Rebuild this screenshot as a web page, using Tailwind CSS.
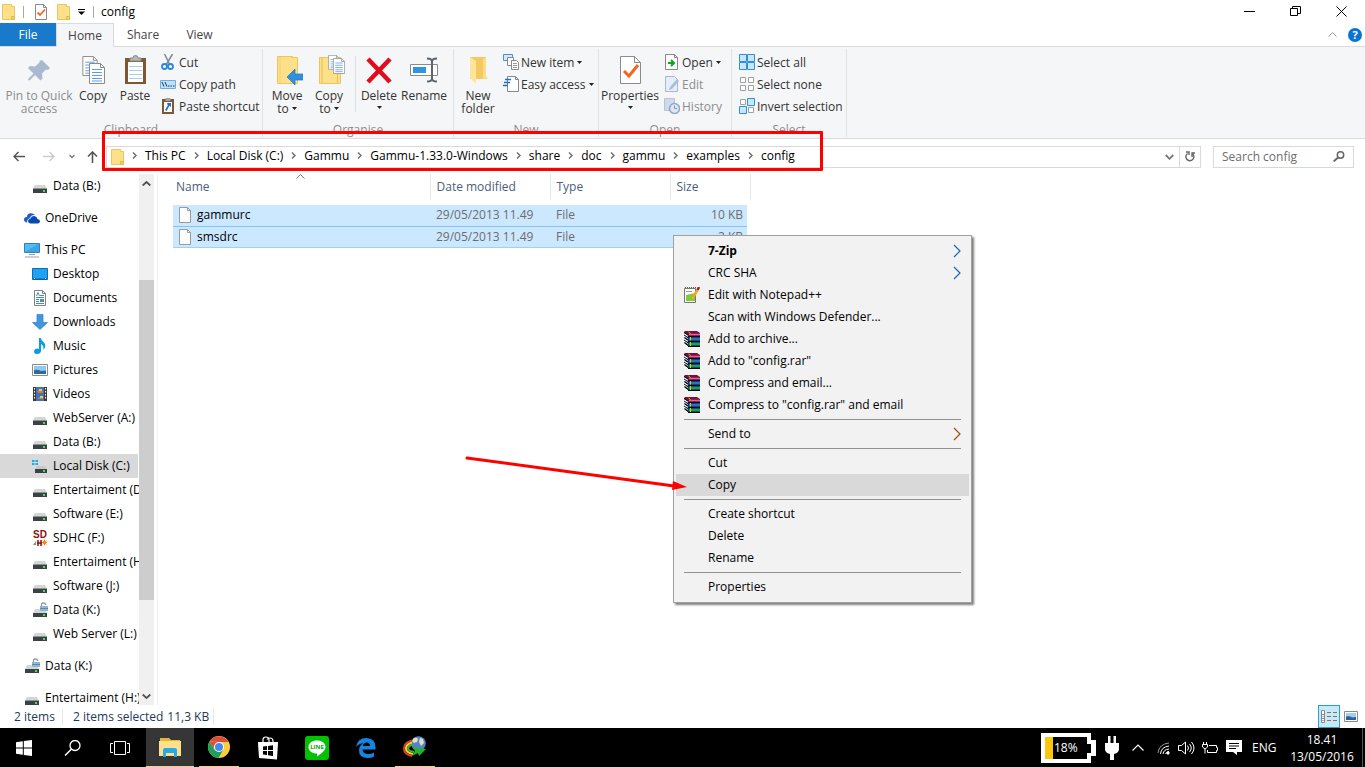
<!DOCTYPE html>
<html lang="en">
<head>
  <meta charset="UTF-8">
  <title>config</title>
  <meta name="viewport" content="width=device-width, initial-scale=1.0">
  <script src="https://cdn.jsdelivr.net/npm/@tailwindcss/browser@4"></script>
</head>
<body class="relative flex h-screen flex-col overflow-hidden bg-white font-['Open_Sans',sans-serif] text-[12px] leading-4 text-black">

  <!-- Shared icons -->
  <svg class="hidden" xmlns="http://www.w3.org/2000/svg">
    <symbol id="folder" viewBox="0 0 14 16">
      <path d="M.5.5h9v2h3v13H.5z" fill="#ffe08a" stroke="#eac65c"/>
      <path d="M9.500 12.500h3v3h-3z" fill="#f2cf6b" stroke="#e3bb4a"/>
    </symbol>
    <symbol id="checkdoc" viewBox="0 0 12 16">
      <path d="M.5.5h8l3 3v12H.5z" fill="#fff" stroke="#8a8a8a"/>
      <path d="M8.500.5v3h3" fill="none" stroke="#8a8a8a"/>
      <path d="M2.500 8.500l2.500 2.500 5-5.500" fill="none" stroke="#f4651d" stroke-width="1.800"/>
    </symbol>
    <symbol id="down" viewBox="0 0 5 3"><path d="M0 0h5L2.500 3z" fill="#222"/></symbol>
    <symbol id="crumb" viewBox="0 0 5 7"><path d="M1 .5l3 3-3 3" fill="none" stroke="#6b6b6b" stroke-width="1.400"/></symbol>
    <symbol id="drive" viewBox="0 0 16 16">
      <path d="M3 7h10l2 4H1z" fill="#d3d6d8"/>
      <path d="M1 11h14v4H1z" fill="#3c4144"/>
      <path d="M1 10.500h14" stroke="#8d9294"/>
      <path d="M11 12h2v2h-2z" fill="#3ee055"/>
    </symbol>
    <symbol id="lockdrive" viewBox="0 0 16 16">
      <path d="M3 7h10l2 4H1z" fill="#d3d6d8"/>
      <path d="M1 11h14v4H1z" fill="#3c4144"/>
      <path d="M11 12h2v2h-2z" fill="#3ee055"/>
      <path d="M9.500 5V2.500Q9.500 1 11.500 1T13.500 2.500V3" fill="none" stroke="#8c9aa3" stroke-width="1.300"/>
      <path d="M8 4h8v5H8z" fill="#8fb6cf"/>
      <path d="M8 6.500h8" stroke="#5d89a8"/>
    </symbol>
    <symbol id="file" viewBox="0 0 12 16">
      <path d="M.5.5h8l3 3v12H.5z" fill="#fdfdfd" stroke="#9a9a9a"/>
      <path d="M8.500.5v3h3" fill="none" stroke="#9a9a9a"/>
    </symbol>
    <symbol id="rar" viewBox="0 0 16 16">
      <path d="M0 1l1-1h12l3 2v3H5L0 2z" fill="#7a1038"/>
      <path d="M5 3.500h11" stroke="#e05fae" stroke-width="1.500"/>
      <path d="M1 6l3-1h12v5H5L1 8z" fill="#123f86"/>
      <path d="M5 8h11" stroke="#3f8fdc" stroke-width="1.300"/>
      <path d="M1 11l3-1h12v5.500H5L1 13z" fill="#0b5a45"/>
      <path d="M5 13h11" stroke="#35b98a" stroke-width="1.300"/>
      <path d="M0 3l4 2.500M0 5l4 2.500M0 8l4 2.500M0 10l4 2.500M0 13l4 2.500" stroke="#fff" stroke-width=".9"/>
      <path d="M0 1.500l4.500 3M0 4l4.500 3M0 6.500l4.500 3M0 9l4.500 3M0 11.500l4.500 3.500M4 5.500h12M4 10.500h12M4 15.500h12" stroke="#0a0a0a"/>
      <path d="M4.500 1l2 1.500M6.500 6v3.500M6.500 11v4" stroke="#f1c40f"/>
    </symbol>
    <symbol id="submenu" viewBox="0 0 8 14"><path d="M1 1l6 6-6 6" fill="none" stroke="currentColor" stroke-width="1.200"/></symbol>
    <symbol id="page" viewBox="0 0 16 21">
      <path d="M.5.5h11l4 4v16H.5z" fill="#fff" stroke="#8a8a8a"/>
      <path d="M11.500.5v4h4" fill="none" stroke="#8a8a8a"/>
      <path d="M3 6.500h10M3 9.500h10M3 12.500h10M3 15.500h10M3 18h10" stroke="#5b9be8"/>
    </symbol>
  </svg>

  <!-- Title bar -->
  <header class="flex h-[23px] shrink-0 items-center">
    <svg class="ml-[2px] h-4 w-[14px]"><use href="#folder"/></svg>
    <span class="ml-[7px] h-3 w-px bg-[#a8a8a8]"></span>
    <button class="ml-[11px]" aria-label="Properties"><svg class="h-4 w-3"><use href="#checkdoc"/></svg></button>
    <button class="ml-[10px]" aria-label="New folder"><svg class="h-4 w-[14px]"><use href="#folder"/></svg></button>
    <button class="ml-[7px]" aria-label="Customise toolbar">
      <svg class="h-[6px] w-[7px]" viewBox="0 0 7 6"><path d="M0 .5h7" stroke="#000"/><path d="M0 2.500h7L3.500 6z"/></svg>
    </button>
    <span class="ml-2 h-3 w-px bg-[#a8a8a8]"></span>
    <h1 class="ml-[7px] grow">config</h1>
    <button class="flex h-[22px] w-[46px] items-center justify-center" aria-label="Minimise">
      <svg class="size-[11px]" viewBox="0 0 11 11"><path d="M0 5.500h11" stroke="#000"/></svg>
    </button>
    <button class="flex h-[22px] w-[46px] items-center justify-center" aria-label="Restore">
      <svg class="size-[11px]" viewBox="0 0 11 11" fill="none" stroke="#000"><path d="M.5 2.500h7v7h-7zM2.500 2.500v-2h8v7h-3"/></svg>
    </button>
    <button class="mr-px flex h-[22px] w-[46px] items-center justify-center" aria-label="Close">
      <svg class="size-[11px]" viewBox="0 0 11 11" stroke="#000"><path d="M.5.5l10 10M10.500.5l-10 10"/></svg>
    </button>
  </header>

  <!-- Ribbon tabs -->
  <nav class="flex h-6 shrink-0 border-b border-[#dadbdc] text-[#444]">
    <button class="h-[23px] w-14 bg-[#1979ca] text-white">File</button>
    <button class="h-6 w-[58px] border border-b-0 border-[#dadbdc] bg-[#f5f6f7]">Home</button>
    <button class="h-[23px] w-[58px]">Share</button>
    <button class="h-[23px] w-[55px]">View</button>
    <span class="grow"></span>
    <button class="mr-[11px]" aria-label="Collapse ribbon">
      <svg class="h-[5px] w-[9px]" viewBox="0 0 9 5"><path d="M.5 4.500l4-4 4 4" fill="none" stroke="#999"/></svg>
    </button>
    <button class="my-auto mr-[3px] size-[14px] rounded-full bg-[#0a74d4] text-[11px] leading-[14px] font-bold text-white" aria-label="Help">?</button>
  </nav>

  <!-- Ribbon -->
  <section class="flex h-[92px] shrink-0 overflow-hidden border-b border-[#dadbdc] bg-[#f5f6f7] pt-[2px] leading-[13px] whitespace-nowrap text-[#333]">
    <div class="flex h-[88px] w-[263px] flex-col items-center border-r border-[#e0e1e2]">
      <div class="flex h-[74px] w-full pt-[5px] pl-[5px]">
        <button class="flex w-[68px] flex-col items-center text-[#8d8d8d]" disabled>
          <svg class="size-8" viewBox="0 0 32 32"><path d="M19 6l8 8-2 2-2-.5-4 4 .5 5-2 2-5.500-5.500L7 26l-2 .5.500-2 5-5L5 14l2-2 5 .5 4.500-4L16.500 7z" fill="#a9bad0"/></svg>
          <span class="mt-[3px]">Pin to Quick<br>access</span>
        </button>
        <button class="flex w-10 flex-col items-center">
          <svg class="size-8" viewBox="0 0 32 32"><use href="#page" x="5" y="2" width="16" height="20"/><use href="#page" x="12" y="9" width="16" height="21"/></svg>
          <span class="mt-[3px]">Copy</span>
        </button>
        <button class="flex w-11 flex-col items-center">
          <svg class="size-8" viewBox="0 0 32 32">
            <path d="M6 4h21v26H6z" fill="#7d5836"/><path d="M9 8h15v20H9z" fill="#fff"/>
            <path d="M10 12.500h13M10 16.500h13M10 20.500h13M10 24.500h13" stroke="#aacdf0"/>
            <path d="M11 7V4h3q0-2.500 2.500-2.500T19 4h3v3z" fill="#b7b7b7" stroke="#888"/>
          </svg>
          <span class="mt-[3px]">Paste</span>
        </button>
        <div class="-mt-[3px] flex flex-col pl-[3px]">
          <button class="flex h-[22px] items-center gap-[3px]">
            <svg class="size-4" viewBox="0 0 16 16" fill="none"><path d="M4.500 0L10 11M12.500 0L6 11" stroke="#7c8a96" stroke-width="1.500"/><circle cx="4.500" cy="12.500" r="2.500" stroke="#2b8ad6" stroke-width="1.800"/><circle cx="10.500" cy="12.500" r="2.500" stroke="#2b8ad6" stroke-width="1.800"/></svg>Cut
          </button>
          <button class="flex h-[22px] items-center gap-[3px]">
            <svg class="size-4" viewBox="0 0 16 16"><path d="M.5 4.500h15v8H.5z" fill="#bfe0f8" stroke="#6faedd"/><path d="M2 6l2 4.500M5 6l2 4.500M8 10h1.500M10.500 10H12M13 10h1.500" stroke="#1c3c5c"/></svg>Copy path
          </button>
          <button class="flex h-[22px] items-center gap-[3px]">
            <svg class="size-4" viewBox="0 0 16 16"><path d="M2 1h12v15H2z" fill="#7d5836"/><path d="M4 4h8v10H4z" fill="#fff"/><path d="M5.500 0h5v3h-5z" fill="#a5a5a5"/><path d="M7 5h4v4L9.500 7.800 6.500 13 5 12l2.800-4.500z" fill="#1f6fc2"/></svg>Paste shortcut
          </button>
        </div>
      </div>
      <span class="text-[#8d8d8d]">Clipboard</span>
    </div>

    <div class="flex h-[88px] w-[191px] flex-col items-center border-r border-[#e0e1e2]">
      <div class="flex h-[74px] w-full pt-[5px] pl-[3px]">
        <button class="flex w-[42px] flex-col items-center">
          <svg class="size-8" viewBox="0 0 32 32"><path d="M6.500 2.500h15v27h-15z" fill="#ffe08a" stroke="#eac65c"/><path d="M20.500 3.500h6v26h-20" fill="#ffe08a" stroke="#eac65c"/><path d="M9 3v26" stroke="#f2cf6b"/><path d="M16 23l8-8v5h8v6h-8v5z" fill="#3090dd" stroke="#2479bd" stroke-width=".7"/></svg>
          <span class="mt-[3px]">Move</span>
          <span class="flex items-center gap-[3px]">to<svg class="h-[3px] w-[5px]"><use href="#down"/></svg></span>
        </button>
        <button class="flex w-[42px] flex-col items-center">
          <svg class="size-8" viewBox="0 0 32 32"><path d="M6.500 3.500h21v26h-21z" fill="#ffe08a" stroke="#eac65c"/><path d="M9 4v25M24.500 18v11" stroke="#e5be52"/><use href="#page" x="15" y="1" width="12" height="15"/><use href="#page" x="20" y="4" width="12" height="16"/></svg>
          <span class="mt-[3px]">Copy</span>
          <span class="flex items-center gap-[3px]">to<svg class="h-[3px] w-[5px]"><use href="#down"/></svg></span>
        </button>
        <span class="mt-[2px] ml-[5px] h-14 w-px bg-[#dcdde0]"></span>
        <button class="ml-[3px] flex w-10 flex-col items-center">
          <svg class="size-8" viewBox="0 0 32 32"><path d="M5 5l22 23M27 5L5 28" stroke="#e00b1c" stroke-width="4.500"/></svg>
          <span class="mt-[3px]">Delete</span>
          <svg class="mt-1 h-[3px] w-[5px]"><use href="#down"/></svg>
        </button>
        <button class="ml-px flex w-12 flex-col items-center">
          <svg class="size-8" viewBox="0 0 32 32"><path d="M2.500 10.500h27v11h-27z" fill="#fff" stroke="#8a8a8a"/><path d="M5 13h13v6H5z" fill="#2e94e8"/><path d="M19 4.500q5 0 5 3v17q0 3-5 3M29 4.500q-5 0-5 3v17q0 3 5 3M24 6v20" fill="none" stroke="#5c6670" stroke-width="2"/></svg>
          <span class="mt-[3px]">Rename</span>
        </button>
      </div>
      <span class="text-[#8d8d8d]">Organise</span>
    </div>

    <div class="flex h-[88px] w-[145px] flex-col items-center border-r border-[#e0e1e2]">
      <div class="flex h-[74px] w-full pt-[5px] pl-1">
        <button class="flex w-10 flex-col items-center">
          <svg class="size-8" viewBox="0 0 32 32"><path d="M8 3h16v20l-4 2H8z" fill="#f3ca62"/><path d="M8 3l6 4v23l-6-6z" fill="#ffe49a"/><path d="M21 4h3v18l2 3h-5z" fill="#fbdc85"/></svg>
          <span class="mt-[3px]">New<br>folder</span>
        </button>
        <div class="-mt-[3px] flex flex-col pl-[5px]">
          <button class="flex h-[22px] items-center gap-[2px]">
            <svg class="size-4" viewBox="0 0 16 16"><path d="M.5.500h9v6h-9z" fill="#d2e9fb" stroke="#4b8fc9"/><path d="M4.500 3.500h6v8h-6z" fill="#fff" stroke="#888"/><path d="M8.500 6.500h5l2 2v7h-7z" fill="#fff" stroke="#888"/><path d="M10 9.500h4M10 11.500h4M10 13.500h4" stroke="#999"/></svg>New item<svg class="ml-px h-[3px] w-[5px]"><use href="#down"/></svg>
          </button>
          <button class="flex h-[22px] items-center gap-[2px]">
            <svg class="size-4" viewBox="0 0 16 16"><path d="M4.500.5h8l3 3v12h-11z" fill="#fff" stroke="#888"/><path d="M12.500.5v3h3" fill="none" stroke="#888"/><path d="M2 3.500h6M1 6.500h6M0 9.500h5" stroke="#1f6fc2" stroke-width="1.300"/></svg>Easy access<svg class="ml-px h-[3px] w-[5px]"><use href="#down"/></svg>
          </button>
        </div>
      </div>
      <span class="text-[#8d8d8d]">New</span>
    </div>

    <div class="flex h-[88px] w-[133px] flex-col items-center border-r border-[#e0e1e2]">
      <div class="flex h-[74px] w-full pt-[5px] pl-[3px]">
        <button class="flex w-14 flex-col items-center">
          <svg class="size-8" viewBox="0 0 32 32"><path d="M6.500 2.500h14l6 6v21h-20z" fill="#fff" stroke="#8a8a8a"/><path d="M20.500 2.500v6h6" fill="none" stroke="#8a8a8a"/><path d="M10 17l5 5 9-11" fill="none" stroke="#f4651d" stroke-width="3"/></svg>
          <span class="mt-[3px]">Properties</span>
          <svg class="mt-1 h-[3px] w-[5px]"><use href="#down"/></svg>
        </button>
        <div class="-mt-[3px] flex flex-col pl-[6px]">
          <button class="flex h-[22px] items-center gap-[2px]">
            <svg class="size-4" viewBox="0 0 16 16"><path d="M1.500.5h9l3 3v12h-12z" fill="#fff" stroke="#888"/><path d="M10.500.5v3h3" fill="none" stroke="#888"/><path d="M4 9h5M7 6l3 3-3 3" fill="none" stroke="#13a025" stroke-width="2"/></svg>Open<svg class="ml-px h-[3px] w-[5px]"><use href="#down"/></svg>
          </button>
          <button class="flex h-[22px] items-center gap-[2px] text-[#8d8d8d]" disabled>
            <svg class="size-4" viewBox="0 0 16 16"><path d="M1.500.5h9l3 3v12h-12z" fill="#e6edf6" stroke="#a9b8cc"/><path d="M5 14l1-3 7-8 2 2-7 8z" fill="#a9bedb"/></svg>Edit
          </button>
          <button class="flex h-[22px] items-center gap-[2px] text-[#8d8d8d]" disabled>
            <svg class="size-4" viewBox="0 0 16 16"><path d="M.5.5h10v12H.5z" fill="#cfdaea" stroke="#b4c3d8"/><circle cx="10.500" cy="10.500" r="5" fill="#dde6f2" stroke="#92a7c6" stroke-width="1.500"/><path d="M10.500 7.500v3h2.500" fill="none" stroke="#8296b4"/></svg>History
          </button>
        </div>
      </div>
      <span class="text-[#8d8d8d]">Open</span>
    </div>

    <div class="flex h-[88px] w-[115px] flex-col items-center border-r border-[#e0e1e2]">
      <div class="flex h-[74px] w-full flex-col pt-[2px] pl-[7px]">
        <button class="flex h-[22px] items-center gap-[2px]">
          <svg class="size-4" viewBox="0 0 16 16"><path d="M.5.5h7v7h-7zM8.500.5h7v7h-7zM.5 8.500h7v7h-7zM8.500 8.500h7v7h-7z" fill="#c9e6fb" stroke="#2b90dd"/></svg>Select all
        </button>
        <button class="flex h-[22px] items-center gap-[2px]">
          <svg class="size-4" viewBox="0 0 16 16"><path d="M1.500 1.500h5v5h-5zM9.500 1.500h5v5h-5zM1.500 9.500h5v5h-5zM9.500 9.500h5v5h-5z" fill="#fff" stroke="#a0a0a0"/></svg>Select none
        </button>
        <button class="flex h-[22px] items-center gap-[2px]">
          <svg class="size-4" viewBox="0 0 16 16"><path d="M1.500 1.500h5v5h-5zM9.500 9.500h5v5h-5z" fill="#fff" stroke="#a0a0a0"/><path d="M8.500.5h7v7h-7zM.5 8.500h7v7h-7z" fill="#c9e6fb" stroke="#2b90dd"/></svg>Invert selection
        </button>
      </div>
      <span class="text-[#8d8d8d]">Select</span>
    </div>
  </section>

  <!-- Address bar -->
  <section class="flex h-[35px] shrink-0 items-center pr-[11px]">
    <button class="ml-[13px]" aria-label="Back"><svg class="h-[11px] w-3" viewBox="0 0 12 11"><path d="M12 5.500H1M5.500 1L1 5.500 5.500 10" fill="none" stroke="#555" stroke-width="1.500"/></svg></button>
    <button class="ml-[18px]" aria-label="Forward"><svg class="h-[11px] w-3" viewBox="0 0 12 11"><path d="M0 5.500h11M6.500 1L11 5.500 6.500 10" fill="none" stroke="#ccc" stroke-width="1.500"/></svg></button>
    <button class="ml-[14px]" aria-label="Recent locations"><svg class="h-[5px] w-[6px]" viewBox="0 0 6 5"><path d="M.5 1L3 3.500 5.500 1" fill="none" stroke="#777" stroke-width="1.300"/></svg></button>
    <button class="ml-3" aria-label="Up"><svg class="h-3 w-[11px]" viewBox="0 0 11 12"><path d="M5.500 12V1M1 5.500L5.500 1 10 5.500" fill="none" stroke="#555" stroke-width="1.600"/></svg></button>
    <div class="ml-2 flex h-[22px] grow items-center border border-[#d9d9d9]">
      <svg class="ml-1 h-4 w-[14px]"><use href="#folder"/></svg>
      <ol class="ml-[7px] flex grow items-center gap-2 pb-[2px]">
        <li class="flex items-center gap-2"><svg class="h-[7px] w-[5px]"><use href="#crumb"/></svg><button>This PC</button></li>
        <li class="flex items-center gap-2"><svg class="h-[7px] w-[5px]"><use href="#crumb"/></svg><button>Local Disk (C:)</button></li>
        <li class="flex items-center gap-2"><svg class="h-[7px] w-[5px]"><use href="#crumb"/></svg><button>Gammu</button></li>
        <li class="flex items-center gap-2"><svg class="h-[7px] w-[5px]"><use href="#crumb"/></svg><button>Gammu-1.33.0-Windows</button></li>
        <li class="flex items-center gap-2"><svg class="h-[7px] w-[5px]"><use href="#crumb"/></svg><button>share</button></li>
        <li class="flex items-center gap-2"><svg class="h-[7px] w-[5px]"><use href="#crumb"/></svg><button>doc</button></li>
        <li class="flex items-center gap-2"><svg class="h-[7px] w-[5px]"><use href="#crumb"/></svg><button>gammu</button></li>
        <li class="flex items-center gap-2"><svg class="h-[7px] w-[5px]"><use href="#crumb"/></svg><button>examples</button></li>
        <li class="flex items-center gap-2"><svg class="h-[7px] w-[5px]"><use href="#crumb"/></svg><button>config</button></li>
      </ol>
      <button class="mr-[5px]" aria-label="Previous locations"><svg class="h-[6px] w-[9px]" viewBox="0 0 9 6"><path d="M.7 1l3.800 3.800L8.300 1" fill="none" stroke="#777" stroke-width="1.800"/></svg></button>
      <button class="flex h-5 w-[21px] items-center justify-center border-l border-[#d9d9d9]" aria-label="Refresh"><svg class="h-[11px] w-[10px]" viewBox="0 0 10 11"><path d="M2.500 2.500A4 4 0 1 0 7.500 2.700M7 6V2h3M1 1h3v3" fill="none" stroke="#666" stroke-width="1.400"/></svg></button>
    </div>
    <label class="ml-3 flex h-[22px] w-[141px] items-center border border-[#d9d9d9] pr-2 pl-2">
      <input type="text" aria-label="Search config" placeholder="Search config" class="w-full min-w-0 grow outline-none placeholder:text-[#6d6d6d]">
      <svg class="h-[11px] w-3 shrink-0" viewBox="0 0 12 11"><circle cx="7.500" cy="4" r="3.200" fill="none" stroke="#666" stroke-width="1.500"/><path d="M5 6.500L.7 10.500" stroke="#666" stroke-width="1.800"/></svg>
    </label>
  </section>

  <main class="flex min-h-0 grow">
    <!-- Navigation pane -->
    <nav class="w-[139px] overflow-hidden pr-px whitespace-nowrap">
      <a href="#" class="flex h-6 items-center gap-[5px] pl-8"><svg class="size-4 shrink-0"><use href="#drive"/></svg>Data (B:)</a>
      <a href="#" class="mt-2 flex h-6 items-center gap-[5px] pl-6"><svg class="size-4 shrink-0" viewBox="0 0 16 16"><path d="M3 12.500q-3-.3-3-3T3 7q0-3 3-3.700T11 5q-4-.5-5 3-3 1-3 4.500z" fill="#1d5fc4"/><path d="M6.500 13.500q-2.500-.3-2.500-2.300t2.500-2.700q.8-2.800 3.700-2.500t3.300 3q2.500.4 2.500 2.300t-2 2.200z" fill="#094ab2"/></svg>OneDrive</a>
      <a href="#" class="mt-2 flex h-6 items-center gap-[5px] pl-6"><svg class="size-4 shrink-0" viewBox="0 0 16 16"><path d="M.5 1.500h15v9H.5z" fill="#52bdf5" stroke="#3d7ea6"/><path d="M1 10L14 2h1v8z" fill="#35a6ea"/><path d="M5 12.500h6M1 15h14" stroke="#8fa3ae"/></svg>This PC</a>
      <a href="#" class="flex h-6 items-center gap-[5px] pl-8"><svg class="size-4 shrink-0" viewBox="0 0 16 16"><path d="M.5 2.500h15v11H.5z" fill="#1da2f5" stroke="#0b6db4"/><path d="M1 13h14" stroke="#08598f"/><path d="M2 12.500h1M13 12.500h1" stroke="#fff"/></svg>Desktop</a>
      <a href="#" class="flex h-6 items-center gap-[5px] pl-8"><svg class="size-4 shrink-0" viewBox="0 0 16 16"><path d="M2.500.5h8l3 3v12h-11z" fill="#fff" stroke="#808080"/><path d="M10.500.5v3h3" fill="none" stroke="#808080"/><path d="M4 7.500h8M8 5.500h4M4 9.500h3M4 11.500h3M4 13.500h8" stroke="#3c90cf"/><path d="M8 9h4v3H8z" fill="#5f87a3"/><path d="M4.500 6L6 2.500 7.500 6" fill="none" stroke="#3c90cf"/></svg>Documents</a>
      <a href="#" class="flex h-6 items-center gap-[5px] pl-8"><svg class="size-4 shrink-0" viewBox="0 0 16 16"><path d="M5 .5h6v8h4.500L8 15.500.5 8.500H5z" fill="#3f97df" stroke="#2f7fc1" stroke-width=".7"/></svg>Downloads</a>
      <a href="#" class="flex h-6 items-center gap-[5px] pl-8"><svg class="size-4 shrink-0" viewBox="0 0 16 16"><path d="M7 0h2q0 2 2 3.500t2.300 4Q13.500 10 11 12q1.500-4-2-6v7q-.3 3-4 3-3 0-3-2.500t3-3q1.300 0 2 .5z" fill="#0a9cec"/></svg>Music</a>
      <a href="#" class="flex h-6 items-center gap-[5px] pl-8"><svg class="size-4 shrink-0" viewBox="0 0 16 16"><path d="M.5 2.500h15v11H.5z" fill="#fff" stroke="#8a8a8a"/><path d="M2 4h12v8H2z" fill="#8fcaf0"/><path d="M2 8q4-1 7 1l5-.5V12H2z" fill="#33689a"/></svg>Pictures</a>
      <a href="#" class="flex h-6 items-center gap-[5px] pl-8"><svg class="size-4 shrink-0" viewBox="0 0 16 16"><path d="M1 1h14v14H1z" fill="#3c3c3c"/><path d="M4 1h8v14H4z" fill="#3c74c4"/><path d="M5 5q3-3 6 0v2H6zM5 13q3-3 6-2v2z" fill="#e0752f"/><path d="M7 3h3v2H7zM8 10h3v2H8z" fill="#e9cf46"/><path d="M2.500 2v12M13.500 2v12" stroke="#fff" stroke-dasharray="1.500 1.500"/></svg>Videos</a>
      <a href="#" class="flex h-6 items-center gap-[5px] pl-8"><svg class="size-4 shrink-0"><use href="#drive"/></svg>WebServer (A:)</a>
      <a href="#" class="flex h-6 items-center gap-[5px] pl-8"><svg class="size-4 shrink-0"><use href="#drive"/></svg>Data (B:)</a>
      <a href="#" class="flex h-6 items-center gap-[5px] bg-[#d9d9d9] pl-8"><svg class="size-4 shrink-0" viewBox="0 0 16 16"><path d="M5 8h8l2 3H3z" fill="#c6c9cb"/><path d="M3 11h12v4H3z" fill="#3c4144"/><path d="M11 12h2v2h-2z" fill="#3ee055"/><path d="M0 2h2.500v2H0zM3.500 2H6v2H3.500zM0 5h2.500v2H0zM3.500 5H6v2H3.500z" fill="#12b0ee"/></svg>Local Disk (C:)</a>
      <a href="#" class="flex h-6 items-center gap-[5px] pl-8"><svg class="size-4 shrink-0"><use href="#drive"/></svg>Entertaiment (D:)</a>
      <a href="#" class="flex h-6 items-center gap-[5px] pl-8"><svg class="size-4 shrink-0"><use href="#drive"/></svg>Software (E:)</a>
      <a href="#" class="flex h-6 items-center gap-[5px] pl-8"><svg class="size-4 shrink-0" viewBox="0 0 16 16"><text x="1" y="8" font-size="10" font-weight="700" fill="#8b1010" font-family="Liberation Sans">SD</text><path d="M6 10v6M9 10v6M5 13h5" stroke="#8b1010" stroke-width="1.500"/><path d="M1 15l3-4v4z" fill="#888"/><path d="M12.500 9.500v6M10 12.500h5M10.500 10.500l4 4M14.500 10.500l-4 4" stroke="#f08a24"/></svg>SDHC (F:)</a>
      <a href="#" class="flex h-6 items-center gap-[5px] pl-8"><svg class="size-4 shrink-0"><use href="#drive"/></svg>Entertaiment (H:)</a>
      <a href="#" class="flex h-6 items-center gap-[5px] pl-8"><svg class="size-4 shrink-0"><use href="#drive"/></svg>Software (J:)</a>
      <a href="#" class="flex h-6 items-center gap-[5px] pl-8"><svg class="size-4 shrink-0"><use href="#lockdrive"/></svg>Data (K:)</a>
      <a href="#" class="flex h-6 items-center gap-[5px] pl-8"><svg class="size-4 shrink-0"><use href="#drive"/></svg>Web Server (L:)</a>
      <a href="#" class="mt-2 flex h-6 items-center gap-[5px] pl-6"><svg class="size-4 shrink-0"><use href="#lockdrive"/></svg>Data (K:)</a>
      <a href="#" class="mt-2 flex h-6 items-center gap-[5px] pl-6"><svg class="size-4 shrink-0"><use href="#drive"/></svg>Entertaiment (H:)</a>
    </nav>
    <!-- Scrollbar -->
    <div class="flex w-[15px] flex-col items-center bg-[#f0f0f0]">
      <svg class="mt-[7px] h-[5px] w-[9px]" viewBox="0 0 9 5"><path d="M.7 4.500l3.800-3.500 3.800 3.500" fill="none" stroke="#505050" stroke-width="1.800"/></svg>
      <span class="mt-[94px] h-80 w-full bg-[#cdcdcd]"></span>
      <svg class="mt-auto mb-[6px] h-[5px] w-[9px]" viewBox="0 0 9 5"><path d="M.7.5l3.800 3.500L8.300.5" fill="none" stroke="#505050" stroke-width="1.800"/></svg>
    </div>
    <!-- File list -->
    <section class="ml-[3px] grow border-l border-[#f0f0f0] pl-[15px]">
      <table class="w-[577px] table-fixed border-collapse">
        <colgroup><col class="w-[257px]"><col class="w-[120px]"><col class="w-[120px]"><col class="w-[77px]"><col class="w-[3px]"></colgroup>
        <thead>
          <tr class="h-[25px] text-left text-[#4c607a]">
            <th class="relative border-r border-[#e5e5e5] pl-[3px] font-normal">Name<svg class="absolute top-0 left-[123px] h-[5px] w-[9px]" viewBox="0 0 9 5"><path d="M.5 4.500l4-4 4 4" fill="none" stroke="#777"/></svg></th>
            <th class="border-r border-[#e5e5e5] pl-[6px] font-normal">Date modified</th>
            <th class="border-r border-[#e5e5e5] pl-[6px] font-normal">Type</th>
            <th class="pl-[6px] font-normal">Size</th>
            <th class="border-r border-[#e5e5e5]"></th>
          </tr>
          <tr class="h-[6px]"></tr>
        </thead>
        <tbody class="text-[#6d6d6d]">
          <tr class="h-[21px]">
            <td class="border-b border-[#84c3f8] bg-[#cce8ff] pl-[6px] text-black"><span class="flex items-center gap-[6px]"><svg class="h-4 w-3"><use href="#file"/></svg>gammurc</span></td>
            <td class="border-b border-[#84c3f8] bg-[#cce8ff] pl-[6px]">29/05/2013 11.49</td>
            <td class="border-b border-[#84c3f8] bg-[#cce8ff] pl-[6px]">File</td>
            <td class="border-b border-[#84c3f8] bg-[#cce8ff] pr-1 text-right">10 KB</td>
          </tr>
          <tr class="h-[21px]">
            <td class="border-b border-[#99d1ff] bg-[#cce8ff] pl-[6px] text-black"><span class="flex items-center gap-[6px]"><svg class="h-4 w-3"><use href="#file"/></svg>smsdrc</span></td>
            <td class="border-b border-[#99d1ff] bg-[#cce8ff] pl-[6px]">29/05/2013 11.49</td>
            <td class="border-b border-[#99d1ff] bg-[#cce8ff] pl-[6px]">File</td>
            <td class="border-b border-[#99d1ff] bg-[#cce8ff] pr-1 text-right">2 KB</td>
          </tr>
        </tbody>
      </table>
    </section>
  </main>

  <!-- Status bar -->
  <footer class="flex h-[23px] shrink-0 items-center pr-[7px] text-[#1e395b]">
    <span class="w-[49px] pl-[14px] whitespace-nowrap">2 items</span>
    <span class="ml-[13px] h-4 w-px bg-[#e8e8e8]"></span>
    <span class="ml-[10px]">2 items selected</span>
    <span class="ml-1">11,3 KB</span>
    <span class="ml-1 h-4 w-px bg-[#e8e8e8]"></span>
    <span class="grow"></span>
    <button class="flex h-[23px] w-[22px] items-center justify-center border border-[#26a0da] bg-[#cbe8f6]" aria-label="Details view">
      <svg class="h-[13px] w-4" viewBox="0 0 16 13"><path d="M.5.5h3v12h-3zM.5 4.500h3M.5 8.500h3" fill="#fff" stroke="#888"/><path d="M6 2.500h4M12 2.500h4M6 6.500h4M12 6.500h4M6 10.500h4M12 10.500h4" stroke="#777"/><path d="M1.500 6h1v1h-1z" fill="#2a8ad4"/><path d="M1.500 10h1v1h-1z" fill="#d42a2a"/></svg>
    </button>
    <button class="ml-1" aria-label="Large icons view">
      <svg class="h-[11px] w-[14px]" viewBox="0 0 14 11"><path d="M.5.5h13v10H.5z" fill="#fff" stroke="#8a8a8a"/><path d="M2 2h10v7H2z" fill="#9dd0f3"/><path d="M2 5.500q4-1 6 1l4-.5v3H2z" fill="#2d5f90"/></svg>
    </button>
  </footer>

  <!-- Taskbar -->
  <footer class="flex h-[39px] shrink-0 items-center bg-black text-white">
    <button class="flex h-full w-12 items-center justify-center" aria-label="Start"><svg class="size-4" viewBox="0 0 16 16"><path d="M0 2.300L6.800 1.300v6.200H0zM7.800 1.100L16 0v7.500H7.800zM0 8.500h6.800v6.200L0 13.700zM7.800 8.500H16V16l-8.200-1.100z" fill="#fff"/></svg></button>
    <button class="flex h-full w-12 items-center justify-center" aria-label="Search"><svg class="h-4 w-[17px]" viewBox="0 0 17 16"><circle cx="11" cy="5.500" r="5" fill="none" stroke="#fff" stroke-width="1.300"/><path d="M7.500 9L1 15.500" stroke="#fff" stroke-width="1.500"/></svg></button>
    <button class="flex h-full w-12 items-center justify-center" aria-label="Task view"><svg class="h-[14px] w-5" viewBox="0 0 20 14"><path d="M4.500.5h11v13h-11zM3 2.500H.5v9H3M17 2.500h2.500v9H17" fill="none" stroke="#fff"/></svg></button>
    <div class="ml-[2px] flex h-full gap-px">
      <button class="flex h-full w-12 items-center justify-center border-b border-[#f3c9ab] bg-[#363636]" aria-label="File Explorer"><svg class="h-[19px] w-[22px]" viewBox="0 0 22 19"><path d="M1 0h9l2 2h9v5H1z" fill="#e5b43c"/><path d="M0 3h22v15H0z" fill="#fde08b"/><path d="M4 19v-7q0-2 2-2h10q2 0 2 2v7h-3v-4H7v4z" fill="#27a8e8"/></svg></button>
      <button class="flex h-full w-12 items-center justify-center" aria-label="Google Chrome"><span class="flex h-full w-10 items-center justify-center border-b border-[#f3c9ab]"><svg class="size-[22px]" viewBox="0 0 22 22"><circle cx="11" cy="11" r="11" fill="#fbce3b"/><path d="M1.500 5.500A11 11 0 0 1 20.500 6H11z" fill="#dd4b3e"/><path d="M1.500 5.500l5.200 8L11 6H6z" fill="#dd4b3e"/><path d="M1.500 5.500A11 11 0 0 0 10.500 22l4.800-8.500H6.300z" fill="#1ba05e"/><circle cx="11" cy="11" r="5" fill="#fff"/><circle cx="11" cy="11" r="4" fill="#4587f3"/></svg></span></button>
      <button class="flex h-full w-12 items-center justify-center" aria-label="Store"><svg class="h-6 w-[22px]" viewBox="0 0 22 24"><path d="M1 6h20v1l-1 16.500L2 22 1 7z" fill="#fff"/><path d="M6 6V4q0-3 3-3t3 3v2M10 3.500q1-1.500 3-1.500 3 0 3 3v1" fill="none" stroke="#fff" stroke-width="1.200"/><path d="M6 10.500l4-.5v4H6zM11 10l5-.7V14h-5zM6 15h4v4l-4-.5zM11 15h5v5l-5-.8z" fill="#000"/></svg></button>
      <button class="flex h-full w-12 items-center justify-center" aria-label="LINE"><svg class="size-6" viewBox="0 0 24 24"><rect width="24" height="24" rx="3" fill="#00c300"/><path d="M12 4.500c5 0 8.500 2.700 8.500 6.500 0 4-5 7-8.500 9.500v-3c-5 0-8.500-2.700-8.500-6.500S7 4.500 12 4.500z" fill="#fff"/><text x="12" y="13.200" font-size="6" font-weight="700" fill="#00a800" text-anchor="middle" font-family="Open Sans">LINE</text></svg></button>
      <button class="flex h-full w-12 items-center justify-center" aria-label="Edge"><svg class="size-5" viewBox="0 0 20 20"><path d="M0 9Q1.500 0 10.500 0 19.500.5 19.500 9v2.500H6.500q.3 4.500 6 4.500 3.500 0 5.500-1.500v4Q15.500 20 11.500 20 3 20 3 12.500 3 7.500 7.500 5 3 5.500 0 9zM6.700 8H14q0-3.500-3.200-3.500T6.700 8z" fill="#1684e0"/></svg></button>
      <button class="flex h-full w-12 items-center justify-center" aria-label="Internet Download Manager"><span class="flex h-full w-10 items-center justify-center border-b border-[#f3c9ab]"><svg class="h-[22px] w-6" viewBox="0 0 24 22"><circle cx="15.500" cy="7.500" r="7.300" fill="#5582cf"/><path d="M11 2q3-1 4 1l-1 3-3 1-2-2zM17 2l3 1 1 4-3 3-2-4z" fill="#dfe0b4"/><path d="M9 4.500q-8 2-8 8T9 20" fill="none" stroke="#e23a2a" stroke-width="2"/><path d="M9 6.500q-6 2-6 6t7 5.500" fill="none" stroke="#f5d327" stroke-width="2"/><path d="M9.500 8.500q-4.500 1.500-4.500 4t6 3.500" fill="none" stroke="#3db54a" stroke-width="2"/><path d="M9 11l14 2-7 7-1-3-6 3 3-5z" fill="#26b32a"/></svg></span></button>
    </div>
    <span class="grow"></span>
    <!-- Notification area -->
    <div class="relative h-[30px] w-[55px]">
      <svg class="h-full w-full" viewBox="0 0 55 30"><path d="M0 0h50v7h5v16h-5v7H0z" fill="#fff"/><path d="M4 4h42v7h4v9h-4v6H4z" fill="#000"/><path d="M4 4h8v22H4z" fill="#fdc50f"/></svg>
      <span class="absolute top-[7px] left-[13px]">18%</span>
    </div>
    <svg class="ml-[9px] h-6 w-[14px]" viewBox="0 0 14 24"><path d="M3 0h2.500v7h3V0H11v7h3v6q0 4-5 5v6H5v-6q-5-1-5-5V7h3z" fill="#fff"/></svg>
    <button class="ml-[13px]" aria-label="Show hidden icons"><svg class="h-[7px] w-3" viewBox="0 0 12 7"><path d="M.5 6.500L6 1l5.500 5.500" fill="none" stroke="#fff" stroke-width="1.200"/></svg></button>
    <svg class="ml-[13px] h-[14px] w-[13px]" viewBox="0 0 13 14" fill="none" stroke="#fff"><path d="M1 12Q2 3 12 2" stroke="#999"/><path d="M3.500 13Q4 6 12 5M6 13q.5-4.500 6-5M8.500 13q.5-2 3.500-2.500"/><path d="M10 11h2v2h-2z" fill="#fff"/></svg>
    <svg class="ml-2 h-[14px] w-[17px]" viewBox="0 0 17 14" fill="none" stroke="#fff"><path d="M.5 4.500h3l4-3.500v12l-4-3.500h-3zM9.500 4.500q2 2.500 0 5M11.500 3q3.500 4 0 8M13.500 1q5 6 0 12"/></svg>
    <svg class="ml-[7px] h-3 w-[17px]" viewBox="0 0 17 12" fill="none" stroke="#fff"><path d="M7 3.500h7.500v2h1v3h-1v2h-9V8M1.500 0v2.500M4.500 0v2.500M.5 2.500h5V5L3 7 .5 5zM3 7v4.500"/></svg>
    <svg class="ml-[7px] h-[15px] w-4" viewBox="0 0 16 15"><path d="M0 0h16v12h-5v3l-4-3H0z" fill="#fff"/><path d="M3 3.500h10M3 6h10M3 8.500h7" stroke="#000"/></svg>
    <span class="ml-[10px] w-6">ENG</span>
    <time class="ml-[11px] w-[70px] text-center leading-[17px] whitespace-nowrap">18.41<br>13/05/2016</time>
    <span class="mr-[2px] ml-[5px] h-full w-px bg-[#555]"></span>
  </footer>

  <!-- Context menu -->
  <ul role="menu" class="absolute top-[235px] left-[673px] w-[299px] border border-[#a0a0a0] bg-[#f2f2f2] px-[2px] py-1 shadow-[2px_2px_2px_rgba(0,0,0,0.5)]">
    <li><button role="menuitem" class="flex h-[22px] w-full items-center pr-2 pl-8 font-bold"><span class="grow text-left">7-Zip</span><svg class="h-[14px] w-2 text-[#1668b8]"><use href="#submenu"/></svg></button></li>
    <li><button role="menuitem" class="flex h-[22px] w-full items-center pr-2 pl-8"><span class="grow text-left">CRC SHA</span><svg class="h-[14px] w-2 text-[#1668b8]"><use href="#submenu"/></svg></button></li>
    <li><button role="menuitem" class="flex h-[22px] w-full items-center gap-2 pl-2"><svg class="size-4" viewBox="0 0 16 16"><path d="M.5 1.500h11v14H.5z" fill="#fff" stroke="#777"/><path d="M2 8l9-2v8H2z" fill="#7dcb3c"/><path d="M1 .5h11" stroke="#555" stroke-dasharray="1 1"/><path d="M2 4.500h6" stroke="#999"/><path d="M13.500 3L8 12" stroke="#f2a81c" stroke-width="2.500"/><path d="M15 0l-1.500 3" stroke="#a02020" stroke-width="2.500"/></svg>Edit with Notepad++</button></li>
    <li><button role="menuitem" class="flex h-[22px] w-full items-center pl-8">Scan with Windows Defender...</button></li>
    <li><button role="menuitem" class="flex h-[22px] w-full items-center gap-2 pl-2"><svg class="size-4"><use href="#rar"/></svg>Add to archive...</button></li>
    <li><button role="menuitem" class="flex h-[22px] w-full items-center gap-2 pl-2"><svg class="size-4"><use href="#rar"/></svg>Add to "config.rar"</button></li>
    <li><button role="menuitem" class="flex h-[22px] w-full items-center gap-2 pl-2"><svg class="size-4"><use href="#rar"/></svg>Compress and email...</button></li>
    <li><button role="menuitem" class="flex h-[22px] w-full items-center gap-2 pl-2"><svg class="size-4"><use href="#rar"/></svg>Compress to "config.rar" and email</button></li>
    <li role="separator" class="mx-2 my-[3px] h-px bg-[#919191]"></li>
    <li><button role="menuitem" class="flex h-[22px] w-full items-center pr-2 pl-8"><span class="grow text-left">Send to</span><svg class="h-[14px] w-2 text-[#a34a12]"><use href="#submenu"/></svg></button></li>
    <li role="separator" class="mx-2 my-[3px] h-px bg-[#919191]"></li>
    <li><button role="menuitem" class="flex h-[22px] w-full items-center pl-8">Cut</button></li>
    <li><button role="menuitem" class="flex h-[22px] w-full items-center bg-[#d9d9d9] pl-8">Copy</button></li>
    <li role="separator" class="mx-2 my-[3px] h-px bg-[#919191]"></li>
    <li><button role="menuitem" class="flex h-[22px] w-full items-center pl-8">Create shortcut</button></li>
    <li><button role="menuitem" class="flex h-[22px] w-full items-center pl-8">Delete</button></li>
    <li><button role="menuitem" class="flex h-[22px] w-full items-center pl-8">Rename</button></li>
    <li role="separator" class="mx-2 my-[3px] h-px bg-[#919191]"></li>
    <li><button role="menuitem" class="flex h-[22px] w-full items-center pl-8">Properties</button></li>
  </ul>

  <!-- Red annotations -->
  <div class="pointer-events-none absolute top-[131px] left-[102px] h-10 w-[721px] rounded-[1px] border-3 border-[#fe0000]"></div>
  <svg class="pointer-events-none absolute top-[454px] left-[464px] h-10 w-[226px]" viewBox="0 0 226 40">
    <path d="M3 4l207 28" stroke="#fe0000" stroke-width="3" stroke-linecap="round"/>
    <path d="M209 27l14 6-15 3z" fill="#fe0000"/>
  </svg>
</body>
</html>
